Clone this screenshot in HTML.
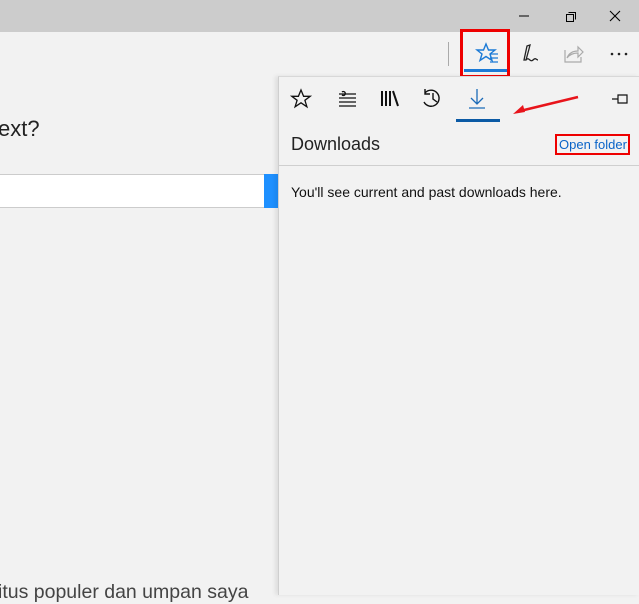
<!DOCTYPE html>
<html><head><style>
body{margin:0;width:639px;height:594px;overflow:hidden;background:#f2f2f2;font-family:"Liberation Sans",sans-serif;position:relative}
.tb{position:absolute;left:0;top:0;width:639px;height:32px;background:#cccccc}
.abs{position:absolute}
.panel{position:absolute;left:278px;top:76px;width:361px;height:518px;background:#f2f2f2;border-left:1px solid #cfcfcf;border-top:1px solid #d8d8d8;box-shadow:-3px 0 4px rgba(0,0,0,0.08)}
</style></head><body>
<div class="tb"></div>
<svg class="abs" style="left:0;top:0" width="639" height="76">
<line x1="519" y1="16" x2="529" y2="16" stroke="#000" stroke-width="1"/>
<rect x="566.5" y="14.5" width="7" height="7" fill="none" stroke="#000"/>
<path d="M568.5 12.5h7v7" fill="none" stroke="#000"/>
<path d="M610 11l10 10M620 11l-10 10" stroke="#000" stroke-width="1.1"/>
<line x1="448.5" y1="42" x2="448.5" y2="66" stroke="#aaa"/>
<path d="M486 44l2.5 6h6.5l-5 4 2 6.5-6-4-6 4 2-6.5-5-4h6.5z" fill="none" stroke="#1b7ad6" stroke-width="1.4"/>
<path d="M490 54h8M490 58h8M490 62h8" stroke="#1b7ad6" stroke-width="1.3"/>
<rect x="464" y="69" width="43" height="3" fill="#1b7ad6"/>
<rect x="461.5" y="30.5" width="47" height="46" fill="none" stroke="#e00" stroke-width="3"/>
<path d="M524 60l3-14 3-1-1 4-3 11zM526 60c3-4 4 3 7 0s3 0 5 0" fill="none" stroke="#222" stroke-width="1.3"/>
<path d="M565 50v12h16v-5M567 58c2-5 6-7 11-7v-4l5 5-5 5v-4c-4 0-8 1-11 5" fill="none" stroke="#aaa" stroke-width="1.2"/>
<circle cx="612" cy="54" r="1.3" fill="#222"/><circle cx="619" cy="54" r="1.3" fill="#222"/><circle cx="626" cy="54" r="1.3" fill="#222"/>
</svg>
<div class="abs" style="left:-2px;top:116px;font-size:22px;color:#222">ext?</div>
<div class="abs" style="left:0;top:174px;width:264px;height:32px;background:#fff;border-top:1px solid #ccc;border-bottom:1px solid #ccc"></div>
<div class="abs" style="left:264px;top:174px;width:14px;height:34px;background:#1e90ff"></div>
<div class="abs" style="left:-2px;top:581px;font-size:19.5px;color:#444">itus populer dan umpan saya</div>
<div class="panel">
<svg class="abs" style="left:0;top:0" width="361" height="60">
<path d="M22 13l2.6 6.3h6.6l-5.3 4 2 6.5-5.9-4-5.9 4 2-6.5-5.3-4h6.6z" fill="none" stroke="#111" stroke-width="1.3"/>
<path d="M63 15a2 2 0 1 1 0 3M60 17h17M60 21h17M60 25h17M60 29h17" fill="none" stroke="#111" stroke-width="1.3"/>
<path d="M103 14v15M107 14v15M111 14v15M114 14l5 15" stroke="#111" stroke-width="2"/>
<path d="M146 16a8 8 0 1 1 -1 9M146 12v5h5M154 16v6l4 3" fill="none" stroke="#111" stroke-width="1.4"/>
<path d="M198 12v15M192 21l6 6 6-6M190 31h16" fill="none" stroke="#1b6bb8" stroke-width="1.3"/>
<rect x="177" y="42" width="44" height="3" fill="#0b5aa5"/>
<path d="M299 20l-58 14" stroke="#e8141b" stroke-width="2.5"/>
<path d="M234 37l10-9 2 7z" fill="#e8141b"/>
<path d="M333 22h6M339 18v8h9v-8zM348 19v6" fill="none" stroke="#111" stroke-width="1.2"/>
</svg>
<div class="abs" style="left:12px;top:57px;font-size:18px;color:#222">Downloads</div>
<div class="abs" style="left:276px;top:57px;width:75px;height:21px;border:2px solid #e00;box-sizing:border-box"></div>
<div class="abs" style="left:280px;top:60px;font-size:13px;color:#0a64c8">Open folder</div>
<div class="abs" style="left:0;top:88px;width:361px;height:1px;background:#cfcfcf"></div>
<div class="abs" style="left:12px;top:107px;font-size:14px;color:#111">You'll see current and past downloads here.</div>
</div>
</body></html>
